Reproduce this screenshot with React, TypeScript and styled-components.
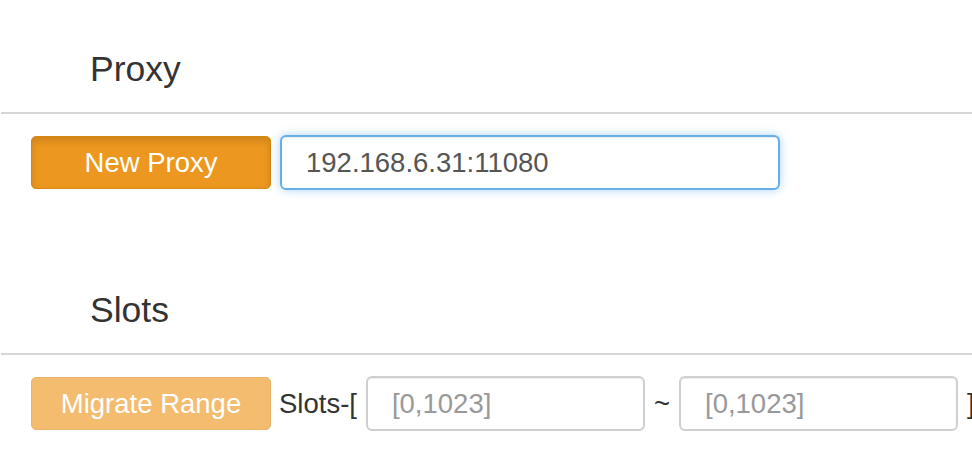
import React from "react";
import styled, { createGlobalStyle } from "styled-components";

const GlobalStyle = createGlobalStyle`
    body {
        margin: 0;
        background: #fff;
        font-family: "Liberation Sans", Arial, sans-serif;
        color: #333;
        overflow: hidden;
    }
`;

const Page = styled.div`
    padding-top: 50px;
`;

const Section = styled.section<{ gap?: number }>`
    margin-top: ${(props) => props.gap || 0}px;
`;

const PageHeader = styled.div`
    margin-left: 1px;
    padding: 0 0 23px 89px;
    border-bottom: 2px solid #d6d6d6;
`;

const Title = styled.h3`
    margin: 0;
    font-size: 35.5px;
    font-weight: 400;
    line-height: 1.1;
    color: #333;
`;

const Row = styled.div`
    display: flex;
    align-items: center;
    gap: 9px;
    padding-left: 31px;
    margin-top: 21px;
    font-size: 27.5px;

    & > * {
        flex-shrink: 0;
    }
`;

const Button = styled.button<{ disabled?: boolean }>`
    width: 240px;
    height: 53px;
    padding: 0;
    font-family: "Liberation Sans", Arial, sans-serif;
    font-size: 27.5px;
    color: #fff;
    border-radius: 5px;
    border: 1px solid ${(props) => (props.disabled ? "#eab46a" : "#d58512")};
    background: ${(props) => (props.disabled ? "#f3bc6f" : "#ec971f")};
    box-shadow: ${(props) =>
        props.disabled ? "none" : "inset 0 4px 7px rgba(0, 0, 0, 0.13)"};
    cursor: ${(props) => (props.disabled ? "not-allowed" : "pointer")};
`;

const Input = styled.input<{ width: number; focused?: boolean }>`
    box-sizing: border-box;
    width: ${(props) => props.width}px;
    height: 55px;
    padding: 0 0 0 24px;
    font-family: "Liberation Sans", Arial, sans-serif;
    font-size: 27.5px;
    color: #555;
    background: #fff;
    border-radius: 6px;
    border: 2px solid ${(props) => (props.focused ? "#66afe9" : "#cfcfcf")};
    box-shadow: ${(props) =>
        props.focused
            ? "inset 0 1px 1px rgba(0,0,0,.075), 0 0 10px rgba(102,175,233,.55)"
            : "inset 0 1px 1px rgba(0,0,0,.075)"};
    outline: none;

    &::placeholder {
        color: #999;
    }
`;

const Label = styled.span<{ lead?: boolean }>`
    margin-left: ${(props) => (props.lead ? -1 : 0)}px;
    color: #333;
    white-space: nowrap;
`;

export default function App() {
    return (
        <Page>
            <GlobalStyle />
            <Section>
                <PageHeader>
                    <Title>Proxy</Title>
                </PageHeader>
                <Row>
                    <Button>New Proxy</Button>
                    <Input width={500} focused defaultValue="192.168.6.31:11080" />
                </Row>
            </Section>
            <Section gap={101}>
                <PageHeader>
                    <Title>Slots</Title>
                </PageHeader>
                <Row>
                    <Button disabled>Migrate Range</Button>
                    <Label lead>Slots-[</Label>
                    <Input width={279} placeholder="[0,1023]" />
                    <Label>~</Label>
                    <Input width={279} placeholder="[0,1023]" />
                    <Label>]</Label>
                </Row>
            </Section>
        </Page>
    );
}
